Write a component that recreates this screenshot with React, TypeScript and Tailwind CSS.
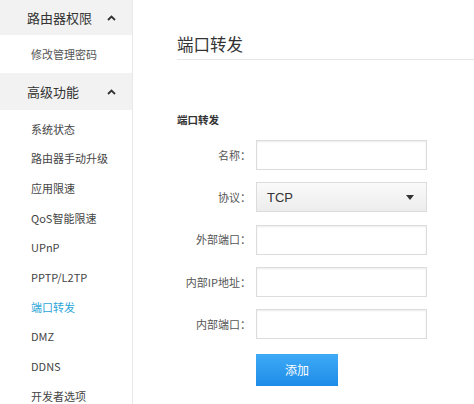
import React from 'react';

const font = { fontFamily: '"Noto Sans CJK SC", "Noto Sans", sans-serif' };

const Chevron = () => (
  <svg width="9" height="6" viewBox="0 0 9 6" className="text-[#333]">
    <path d="M1 5 L4.5 1.5 L8 5" fill="none" stroke="currentColor" strokeWidth="1.8" />
  </svg>
);

const SectionHeader = ({ title, h }: { title: string; h: string }) => (
  <div className={`flex ${h} shrink-0 items-center justify-between bg-[#f2f2f2] pl-[27px] pr-[16px]`}>
    <span className="text-[13px] text-[#333]">{title}</span>
    <Chevron />
  </div>
);

const advanced = ['系统状态', '路由器手动升级', '应用限速', 'QoS智能限速', 'UPnP', 'PPTP/L2TP', '端口转发', 'DMZ', 'DDNS', '开发者选项'];

const fields = [
  { label: '名称：', type: 'input' },
  { label: '协议：', type: 'select' },
  { label: '外部端口：', type: 'input' },
  { label: '内部IP地址：', type: 'input' },
  { label: '内部端口：', type: 'input' },
];

export default function App() {
  return (
    <div className="flex h-[404px] w-[474px] overflow-hidden bg-white" style={font}>
      <aside className="flex w-[133px] shrink-0 flex-col overflow-hidden border-r border-[#e8e8e8]">
        <SectionHeader title="路由器权限" h="h-[35px]" />
        <div className="flex h-[38px] shrink-0 items-center pl-[31px] text-[11px] text-[#555]">修改管理密码</div>
        <SectionHeader title="高级功能" h="h-[37px]" />
        <div className="flex shrink-0 flex-col pt-[4px]">
          {advanced.map((item) => (
            <div
              key={item}
              className={`flex h-[29.7px] shrink-0 items-center pl-[31px] text-[11px] ${item === '端口转发' ? 'text-[#2aa5d8]' : 'text-[#444]'}`}
            >
              {item}
            </div>
          ))}
        </div>
      </aside>

      <main className="flex flex-1 flex-col pl-[44px]">
        <h1 className="mt-[31px] text-[16.5px] leading-[26px] text-[#333]">端口转发</h1>
        <div className="mt-[2px] h-px bg-[#e6e6e6]" />
        <div className="mt-[53px] text-[10.5px] font-bold leading-[14px] text-[#333]">端口转发</div>
        <div className="mt-[13px] flex flex-col gap-[12.25px]">
          {fields.map((f) => (
            <div key={f.label} className="flex h-[30px] items-center">
              <span className="w-[74px] whitespace-nowrap text-right text-[11px] text-[#555]">{f.label}</span>
              {f.type === 'select' ? (
                <div className="ml-[5px] flex h-[30px] w-[171px] items-center justify-between border border-[#dcdcdc] bg-gradient-to-b from-[#fafafa] to-[#ececec] pl-[10px] pr-[12px]">
                  <span className="text-[13px] text-[#333]" style={{ fontFamily: '"Liberation Sans", sans-serif' }}>TCP</span>
                  <svg width="8" height="5" viewBox="0 0 8 5">
                    <path d="M0 0 H8 L4 5 Z" fill="#333" />
                  </svg>
                </div>
              ) : (
                <input
                  type="text"
                  className="ml-[5px] h-[30px] w-[171px] border border-[#dcdcdc] bg-white shadow-[inset_0_1px_2px_rgba(0,0,0,0.08)] outline-none"
                />
              )}
            </div>
          ))}
        </div>
        <button className="ml-[79px] mt-[15px] h-[32px] w-[82px] bg-gradient-to-b from-[#3eaaf6] to-[#1d8ce8] text-[12px] text-white">
          添加
        </button>
      </main>
    </div>
  );
}
